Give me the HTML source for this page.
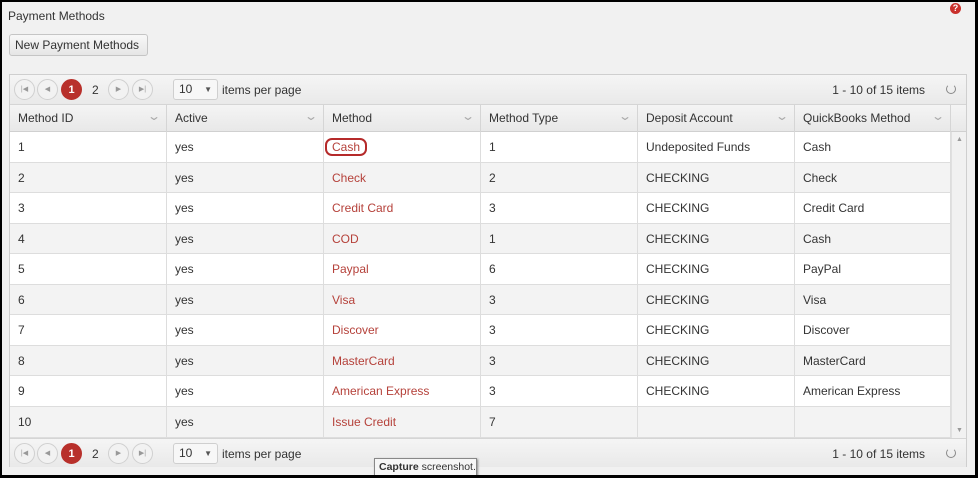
<!DOCTYPE html>
<html><head><meta charset="utf-8"><style>
*{box-sizing:border-box;margin:0;padding:0}
html,body{width:978px;height:478px;overflow:hidden}
body{background:#000;font-family:"Liberation Sans",Arial,sans-serif;font-size:12px;color:#333;position:relative}
#pg{position:absolute;left:2px;top:2px;width:973px;height:473px;background:#f1f1f1;overflow:hidden}
.abs{position:absolute}
.title{left:6px;top:7px;font-size:12px;color:#333}
.btn{left:7px;top:32px;width:139px;height:22px;border:1px solid #c5c5c5;border-radius:3px;background:linear-gradient(#f8f8f8,#e6e6e6);font-size:12px;line-height:20px;padding-left:5px;color:#333;white-space:nowrap}
.help{left:948px;top:1px;width:11px;height:11px;border-radius:50%;background:#c9302c;color:#fff;font-size:9px;font-weight:bold;text-align:center;line-height:11px}
#grid{position:absolute;left:7px;top:72px;width:958px;height:393px;border:1px solid #cfcfcf;background:#fff}
.pager{position:absolute;left:0;width:956px;height:29px;background:linear-gradient(#f5f5f5,#e9e9e9)}
.pb{position:absolute;top:4px;width:21px;height:21px;border:1px solid #d0d0d0;border-radius:50%;background:#f2f2f2;color:#999;font-size:7px;text-align:center;line-height:19px}
.cur{background:#b8302b;border-color:#b8302b;color:#fff;font-size:11px;font-weight:bold;line-height:20px}
.n2{position:absolute;top:8px;left:82px;font-size:12px}
.sel{position:absolute;top:4px;left:163px;width:45px;height:21px;border:1px solid #cfcfcf;border-radius:3px;background:#f7f7f7;font-size:12px;line-height:19px;padding-left:5px}
.sel span{position:absolute;right:5px;top:0;font-size:8px;color:#555}
.ipp{position:absolute;top:8px;left:212px;font-size:12px}
.cnt{position:absolute;top:8px;right:41px;font-size:12px}
.ref{position:absolute;top:9px;right:10px;width:10px;height:10px;border:1.5px solid #888;border-radius:50%;border-top-color:transparent}
.hdr{position:absolute;top:29px;left:0;height:28px;width:956px;background:linear-gradient(#f4f4f4,#e8e8e8);border-top:1px solid #d5d5d5;border-bottom:1px solid #d0d0d0}
.h{position:absolute;top:0;height:27px;border-right:1px solid #d5d5d5;padding:6px 8px;font-size:12px}
.h i{position:absolute;right:7px;top:4px;font-style:normal;font-size:12px;color:#aaa;transform:scaleX(1.4)}
.row{position:absolute;left:0;width:941px;border-bottom:1px solid #ddd}
.c{position:absolute;top:0;height:100%;border-right:1px solid #ddd;padding-left:8px;display:flex;align-items:center;font-size:12px}
.red{color:#b5413a}
.sb{position:absolute;left:941px;top:57px;width:15px;height:306px;background:#f1f1f1;border-left:1px solid #e0e0e0}
.tip{position:absolute;left:372px;top:456px;height:18px;width:103px;background:#f6f6f6;border:1px solid #888;font-size:10.5px;line-height:16px;padding:0 4px;white-space:nowrap;box-shadow:1px 1px 2px #888;overflow:hidden}
</style></head><body><div id="pg">
<div class="abs title">Payment Methods</div>
<div class="abs btn">New Payment Methods</div>
<div class="abs help">?</div>
<div id="grid">
<div class="pager" style="top:0">
<div class="pb" style="left:4px">|◀</div><div class="pb" style="left:27px">◀</div><div class="pb cur" style="left:51px">1</div><div class="n2">2</div><div class="pb" style="left:98px">▶</div><div class="pb" style="left:122px">▶|</div>
<div class="sel">10<span>▼</span></div><div class="ipp">items per page</div><div class="cnt">1 - 10 of 15 items</div><div class="ref"></div></div>
<div class="hdr">
<div class="h" style="left:0;width:157px">Method ID<i>⌄</i></div>
<div class="h" style="left:157px;width:157px">Active<i>⌄</i></div>
<div class="h" style="left:314px;width:157px">Method<i>⌄</i></div>
<div class="h" style="left:471px;width:157px">Method Type<i>⌄</i></div>
<div class="h" style="left:628px;width:157px">Deposit Account<i>⌄</i></div>
<div class="h" style="left:785px;width:156px">QuickBooks Method<i>⌄</i></div>
</div>
<div id="rows"></div>
<div class="sb"><div style="position:absolute;top:4px;left:4px;font-size:7px;color:#999">▲</div><div style="position:absolute;bottom:4px;left:4px;font-size:7px;color:#999">▼</div></div>
<div class="pager" style="top:363px;border-top:1px solid #d5d5d5">
<div class="pb" style="left:4px">|◀</div><div class="pb" style="left:27px">◀</div><div class="pb cur" style="left:51px">1</div><div class="n2">2</div><div class="pb" style="left:98px">▶</div><div class="pb" style="left:122px">▶|</div>
<div class="sel">10<span>▼</span></div><div class="ipp">items per page</div><div class="cnt">1 - 10 of 15 items</div><div class="ref"></div></div>
</div>
<div class="tip"><b>Capture</b> screenshot.</div>
</div>
<script>
var d=[["1","Cash","1","Undeposited Funds","Cash"],["2","Check","2","CHECKING","Check"],["3","Credit Card","3","CHECKING","Credit Card"],["4","COD","1","CHECKING","Cash"],["5","Paypal","6","CHECKING","PayPal"],["6","Visa","3","CHECKING","Visa"],["7","Discover","3","CHECKING","Discover"],["8","MasterCard","3","CHECKING","MasterCard"],["9","American Express","3","CHECKING","American Express"],["10","Issue Credit","7","",""]];
var tops=[57,88,118,149,179,210,240,271,301,332,363],h="";
d.forEach(function(r,i){var m=i==0?'<span style="border:2px solid #b52a2a;border-radius:7px;padding:0 5px;margin-left:-7px">Cash</span>':r[1];
h+='<div class="row" style="top:'+tops[i]+'px;height:'+(tops[i+1]-tops[i])+'px;background:'+(i%2?'#f3f3f3':'#fff')+'">'+
'<div class="c" style="left:0;width:157px">'+r[0]+'</div><div class="c" style="left:157px;width:157px">yes</div><div class="c red" style="left:314px;width:157px">'+m+'</div><div class="c" style="left:471px;width:157px">'+r[2]+'</div><div class="c" style="left:628px;width:157px">'+r[3]+'</div><div class="c" style="left:785px;width:156px">'+r[4]+'</div></div>';});
document.getElementById('rows').innerHTML=h;
</script>
</body></html>
